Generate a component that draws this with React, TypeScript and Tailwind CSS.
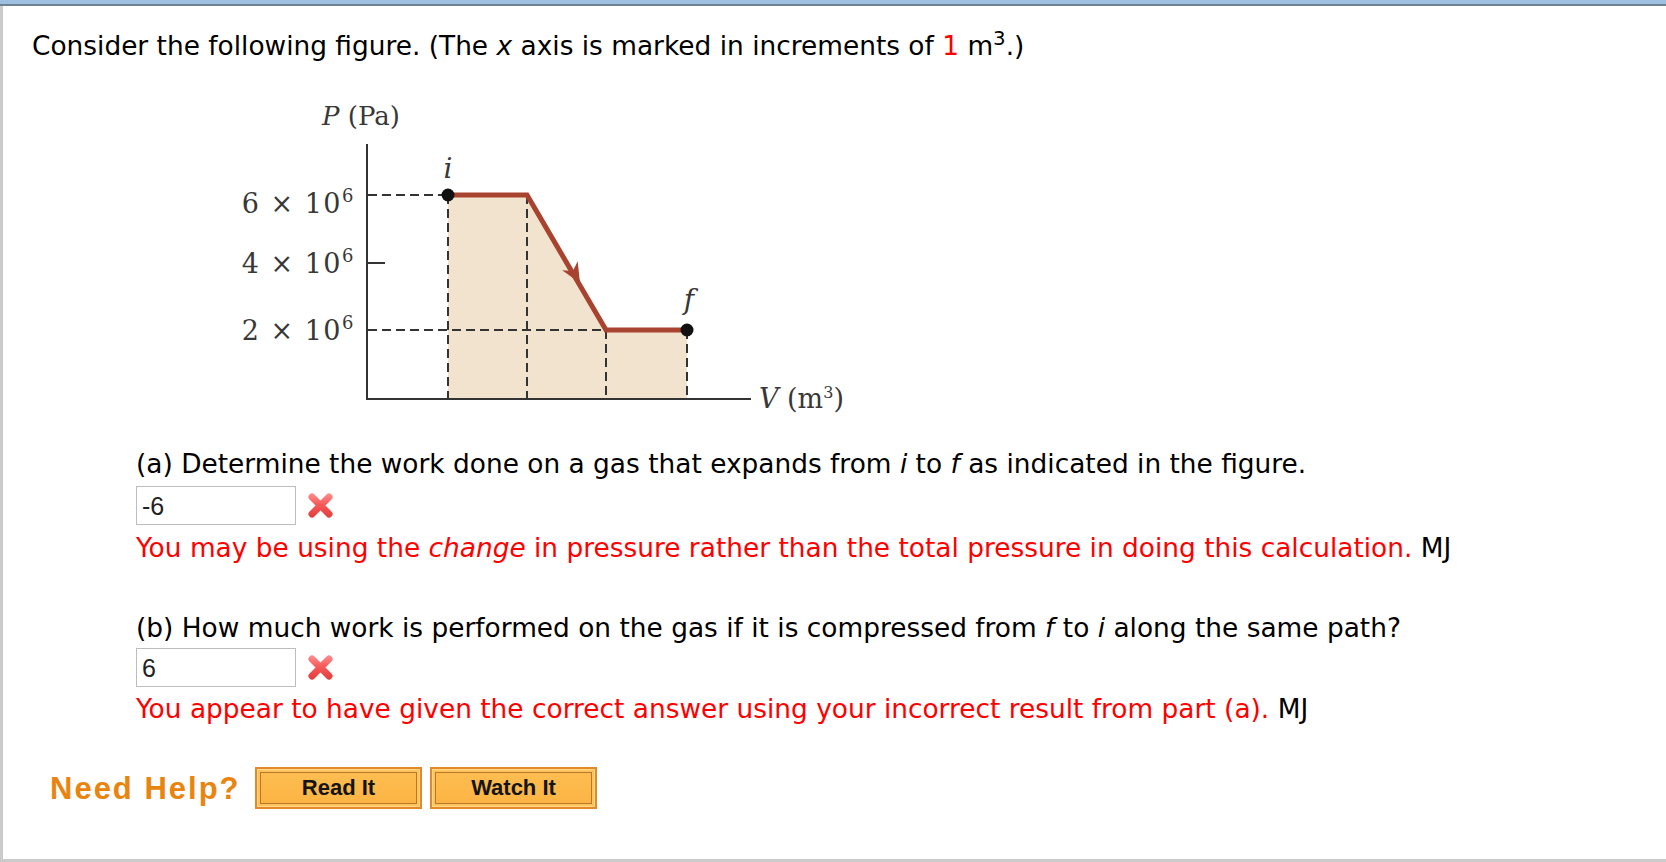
import React from "react";

function XMark({ id }: { id: string }) {
  return (
    <svg width="27" height="27" viewBox="0 0 27 27" className="block">
      <defs>
        <linearGradient id={id} x1="0" y1="0" x2="0" y2="27" gradientUnits="userSpaceOnUse">
          <stop offset="0" stopColor="#ff9494" />
          <stop offset="0.5" stopColor="#f55656" />
          <stop offset="1" stopColor="#e03a3a" />
        </linearGradient>
      </defs>
      <path d="M5 5 L22 22 M22 5 L5 22" stroke={`url(#${id})`} strokeWidth="7" strokeLinecap="round" fill="none" />
    </svg>
  );
}

function Answer({ value, id, className }: { value: string; id: string; className?: string }) {
  return (
    <div className={"flex items-center " + (className ?? "")}>
      <div className="w-[160px] h-[39px] border border-[#bdbdbd] pl-[5px] flex items-center font-['Liberation_Sans',Arial,sans-serif] text-[25px] text-[#222]">
        {value}
      </div>
      <div className="ml-[11px]">
        <XMark id={id} />
      </div>
    </div>
  );
}

function HelpButton({ label }: { label: string }) {
  return (
    <div className="w-[167px] h-[42px] border-2 border-[#e4882a] bg-[#ffc35c] p-[3px] shadow-[inset_0_0_0_1px_#ffd98a]">
      <div className="h-full border border-[#b9772c] bg-[linear-gradient(#fdbd50,#fcb444)] flex items-center justify-center font-['Liberation_Sans',Arial,sans-serif] font-bold text-[22px] text-[#141414] leading-none">
        {label}
      </div>
    </div>
  );
}

function Figure({ className }: { className?: string }) {
  const serif = "'DejaVu Serif', 'Liberation Serif', serif";
  const T = { x: 350, y: 188 };
  const d = { x: 0.505, y: 0.863 };
  const n = { x: 0.863, y: -0.505 };
  const B = { x: T.x - 20 * d.x, y: T.y - 20 * d.y };
  const N = { x: T.x - 14 * d.x, y: T.y - 14 * d.y };
  const arrow = `${T.x},${T.y} ${B.x + 9 * n.x},${B.y + 9 * n.y} ${N.x},${N.y} ${B.x - 9 * n.x},${B.y - 9 * n.y}`;
  return (
    <svg width="640" height="320" viewBox="0 0 640 320" className={"block " + (className ?? "")}>
      <polygon points="218,100 297,100 376,235 457,235 457,304 218,304" fill="#f1e3cd" />
      <g stroke="#333" strokeWidth="2" strokeDasharray="9 5" fill="none">
        <line x1="138" y1="100" x2="218" y2="100" />
        <line x1="138" y1="235" x2="376" y2="235" />
        <line x1="218" y1="100" x2="218" y2="304" />
        <line x1="297" y1="100" x2="297" y2="304" />
        <line x1="376" y1="235" x2="376" y2="304" />
        <line x1="457" y1="235" x2="457" y2="304" />
      </g>
      <g stroke="#333" strokeWidth="2" fill="none">
        <line x1="137" y1="49" x2="137" y2="305" />
        <line x1="136" y1="304" x2="521" y2="304" />
        <line x1="137" y1="168" x2="155" y2="168" />
      </g>
      <polyline points="218,100 297,100 376,235 457,235" stroke="#a8432f" strokeWidth="5" fill="none" strokeLinejoin="miter" />
      <polygon points={arrow} fill="#a8432f" />
      <circle cx="218" cy="100" r="6.5" fill="#111" />
      <circle cx="457" cy="235" r="6.5" fill="#111" />
      <g fontFamily={serif} fill="#383838">
        <text x="92" y="30" fontSize="26">
          <tspan fontStyle="italic">P</tspan> (Pa)
        </text>
        <text x="125" y="118" fontSize="27" letterSpacing="1.5" textAnchor="end">
          6 × 10<tspan dy="-11" fontSize="18">6</tspan>
        </text>
        <text x="125" y="178" fontSize="27" letterSpacing="1.5" textAnchor="end">
          4 × 10<tspan dy="-11" fontSize="18">6</tspan>
        </text>
        <text x="125" y="245" fontSize="27" letterSpacing="1.5" textAnchor="end">
          2 × 10<tspan dy="-11" fontSize="18">6</tspan>
        </text>
        <text x="529" y="313" fontSize="27">
          <tspan fontStyle="italic">V</tspan> (m<tspan dy="-10" fontSize="16">3</tspan>
          <tspan dy="10">)</tspan>
        </text>
        <text x="218" y="83" fontSize="28" fontStyle="italic" textAnchor="middle">i</text>
        <text x="459" y="214" fontSize="28" fontStyle="italic" textAnchor="middle">f</text>
      </g>
    </svg>
  );
}

export default function App() {
  return (
    <div className="w-[1666px] h-[862px] bg-white flex flex-col font-['DejaVu_Sans',Verdana,sans-serif] text-[26.4px] leading-[32px] text-black overflow-hidden">
      <div className="h-[4px] bg-[#9dc0e0] shrink-0" />
      <div className="h-[2px] bg-[#6e8294] shrink-0" />
      <div className="flex-1 border-l-[3px] border-b-[3px] border-[#cbcbcb] pl-[29px] pt-[24px]">
        <p>
          Consider the following figure. (The <i>x</i> axis is marked in increments of{" "}
          <span className="text-[#ff0000]">1</span> m<sup>3</sup>.)
        </p>
        <Figure className="ml-[198px] mt-[33px]" />
        <div className="ml-[104px] mt-[33px]">
          <p>
            (a) Determine the work done on a gas that expands from <i>i</i> to <i>f</i> as indicated in the figure.
          </p>
          <Answer value="-6" id="xa" className="mt-[6px]" />
          <p className="mt-[7px] text-[#ff0000]">
            You may be using the <i>change</i> in pressure rather than the total pressure in doing this calculation.{" "}
            <span className="text-black">MJ</span>
          </p>
          <p className="mt-[48px]">
            (b) How much work is performed on the gas if it is compressed from <i>f</i> to <i>i</i> along the same path?
          </p>
          <Answer value="6" id="xb" className="mt-[4px]" />
          <p className="mt-[6px] text-[#ff0000]">
            You appear to have given the correct answer using your incorrect result from part (a).{" "}
            <span className="text-black">MJ</span>
          </p>
        </div>
        <div className="ml-[18px] mt-[42px] flex items-center">
          <div className="w-[205px] font-['Liberation_Sans',Arial,sans-serif] font-bold text-[31px] tracking-[2px] text-[#e9850f] leading-none">
            Need Help?
          </div>
          <HelpButton label="Read It" />
          <div className="ml-[8px]">
            <HelpButton label="Watch It" />
          </div>
        </div>
      </div>
    </div>
  );
}
